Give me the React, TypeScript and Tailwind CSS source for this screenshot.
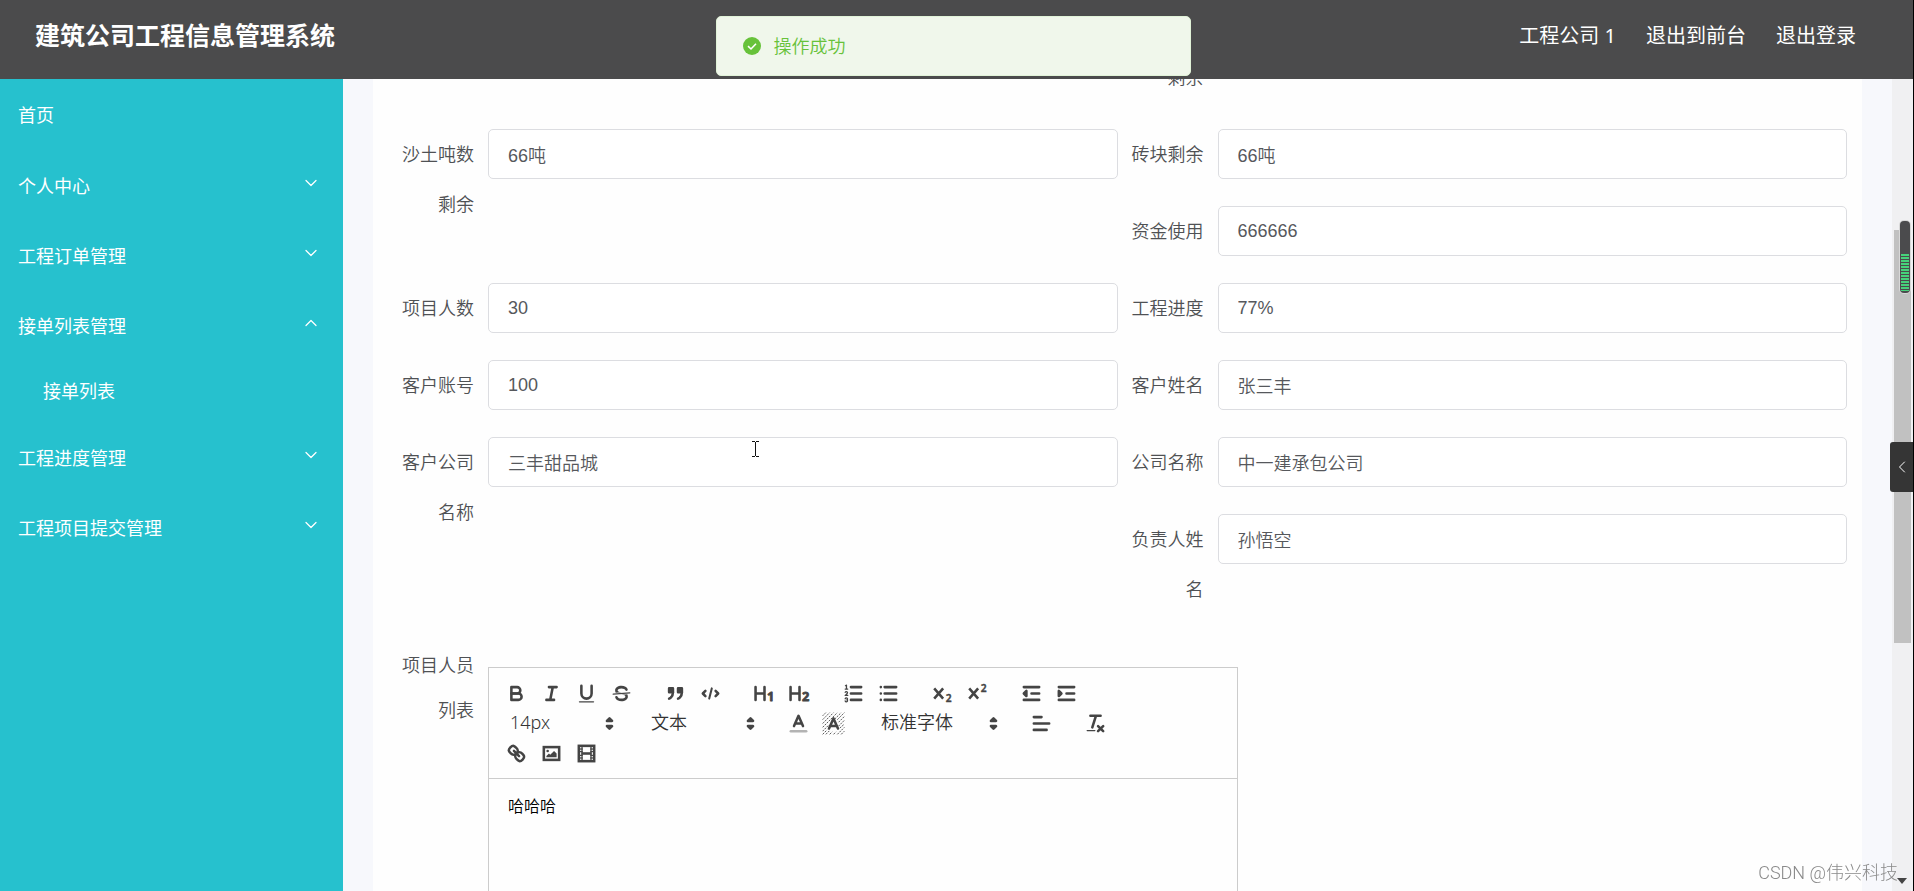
import { useState } from "react";
import type { ReactNode } from "react";
import { ChevronDown, ChevronLeft, ChevronUp } from "lucide-react";

const menu = [
  { title: "个人中心" },
  { title: "工程订单管理" },
  { title: "接单列表管理", children: ["接单列表"] },
  { title: "工程进度管理" },
  { title: "工程项目提交管理" },
];

type FieldProps = {
  id: string;
  label: string;
  value: string;
  className?: string;
};

const Field = ({ id, label, value, className = "" }: FieldProps) => {
  return (
    <div className={`flex items-start ${className}`}>
      <label
        htmlFor={id}
        className="w-[100px] shrink-0 pr-[14px] text-right text-lg leading-[50px] font-[350] text-[#4f5154]"
      >
        {label}
      </label>
      <input
        id={id}
        readOnly
        defaultValue={value}
        className="h-[50px] min-w-0 flex-1 rounded-[5px] border border-[#dcdde1] bg-white px-[19px] font-['Liberation_Sans','Noto_Sans_CJK_SC',sans-serif] text-lg font-[350] text-[#56585c] outline-none"
      />
    </div>
  );
};

const Icon = ({ children }: { children: ReactNode }) => (
  <svg
    viewBox="0 0 18 18"
    className="size-[23px] fill-none stroke-[#444] stroke-2"
    strokeLinecap="round"
    strokeLinejoin="round"
  >
    {children}
  </svg>
);

const solid = { fill: "#444", stroke: "none" };

const icons = {
  bold: (
    <Icon>
      <path d="M5,4H9.5A2.5,2.5,0,0,1,9.5,9H5Z" />
      <path d="M5,9h5.5A2.5,2.5,0,0,1,10.5,14H5Z" />
    </Icon>
  ),
  italic: (
    <Icon>
      <path d="M7,4H13M5,14H11M8,14L10,4" />
    </Icon>
  ),
  underline: (
    <Icon>
      <path d="M5,3V9a4,4,0,0,0,8,0V3" />
      <rect {...solid} height="1" rx="0.5" width="12" x="3" y="15" />
    </Icon>
  ),
  strike: (
    <Icon>
      <path strokeWidth="1" d="M15.5,8.5L2.5,9.5" />
      <path
        {...solid}
        d="M9.007,8C6.542,7.791,6,7.519,6,6.5,6,5.792,7.283,5,9,5c1.571,0,2.765.679,2.969,1.309a1,1,0,0,0,1.9-.617C13.356,4.106,11.354,3,9,3,6.2,3,4,4.538,4,6.5a3.2,3.2,0,0,0,.5,1.843Z"
      />
      <path
        {...solid}
        d="M8.984,10C11.457,10.208,12,10.479,12,11.5c0,0.708-1.283,1.5-3,1.5-1.571,0-2.765-.679-2.969-1.309a1,1,0,1,0-1.9.617C4.644,13.894,6.646,15,9,15c2.8,0,5-1.538,5-3.5a3.2,3.2,0,0,0-.5-1.843Z"
      />
    </Icon>
  ),
  quote: (
    <Icon>
      <rect fill="#444" height="3" width="3" x="4" y="5" />
      <rect fill="#444" height="3" width="3" x="11" y="5" />
      <path fill="#444" d="M7,8c0,4.031-3,5-3,5" />
      <path fill="#444" d="M14,8c0,4.031-3,5-3,5" />
    </Icon>
  ),
  code: (
    <Icon>
      <polyline points="5 7 3 9 5 11" />
      <polyline points="13 7 15 9 13 11" />
      <path strokeWidth="1.6" d="M10,5L8,13" />
    </Icon>
  ),
  h1: (
    <Icon>
      <path d="M2,4V14M9,4V14M2,9H9" />
      <text fill="#444" strokeWidth="0.6" x="11" y="15" fontSize="10" fontWeight="700">1</text>
    </Icon>
  ),
  h2: (
    <Icon>
      <path d="M2,4V14M9,4V14M2,9H9" />
      <text fill="#444" strokeWidth="0.6" x="11" y="15" fontSize="10" fontWeight="700">2</text>
    </Icon>
  ),
  ordered: (
    <Icon>
      <path d="M7,4H15M7,9H15M7,14H15" />
      <g strokeWidth="1">
        <path d="M2.5,5.5H4.5M3.5,5.5V2.5L2.7,2.9" />
        <path d="M4.5,10.5h-2c0-.234,1.85-1.076,1.85-2.234A0.959,0.959,0,0,0,2.5,8.156" />
        <path d="M2.5,14.846a0.959,0.959,0,0,0,1.85-.109A0.7,0.7,0,0,0,3.75,14a0.688,0.688,0,0,0,.6-0.736,0.959,0.959,0,0,0-1.85-.109" />
      </g>
    </Icon>
  ),
  bullet: (
    <Icon>
      <path d="M6,4H15M6,9H15M6,14H15M3,4H3M3,9H3M3,14H3" />
    </Icon>
  ),
  sub: (
    <Icon>
      <path strokeLinecap="butt" d="M2.5,5L9.5,13M9.5,5L2.5,13" />
      <text fill="#444" strokeWidth="0.3" x="11.5" y="16" fontSize="8" fontWeight="600">2</text>
    </Icon>
  ),
  sup: (
    <Icon>
      <path strokeLinecap="butt" d="M2.5,5L9.5,13M9.5,5L2.5,13" />
      <text fill="#444" strokeWidth="0.3" x="11.5" y="8" fontSize="8" fontWeight="600">2</text>
    </Icon>
  ),
  outdent: (
    <Icon>
      <path d="M3,14H15M3,4H15M9,9H15" />
      <polygon fill="#444" points="5 7 5 11 3 9" />
    </Icon>
  ),
  indent: (
    <Icon>
      <path d="M3,14H15M3,4H15M9,9H15" />
      <polygon fill="#444" points="3 7 3 11 5 9" />
    </Icon>
  ),
  color: (
    <Icon>
      <path opacity="0.4" d="M3,15H15" />
      <path d="M5.5,11L9,3L12.5,11M6.4,9H11.6" />
    </Icon>
  ),
  background: (
    <Icon>
      <path
        strokeWidth="0.7"
        strokeDasharray="1.5 0.8"
        strokeLinecap="butt"
        d="M0.5,3L3,0.5M0.5,6L6,0.5M0.5,9L9,0.5M0.5,12L12,0.5M0.5,15L5,10.5M10,5.5L15,0.5M0.5,17.5L4,14M12,6L17.5,0.5M13,8L17.5,3.5M13,11L17.5,6.5M6,17.5L8,15.5M9,17.5L11,15.5M12,17.5L17.5,12M14,12.5L17.5,9.5M15,17.5L17.5,15M3,17.5L6,14.5"
      />
      <path d="M5.5,13L9,5L12.5,13M6.4,11H11.6" />
    </Icon>
  ),
  align: (
    <Icon>
      <path d="M3,9H15M3,14H13M3,4H9" />
    </Icon>
  ),
  clean: (
    <Icon>
      <path d="M5,3H13M6.5,12L9.35,3M11,11L15,15M15,11L11,15" />
      <rect {...solid} height="1" rx="0.5" width="7" x="2" y="14" />
    </Icon>
  ),
  link: (
    <Icon>
      <path d="M7,7L11,11" />
      <path d="M8.9,4.577a3.476,3.476,0,0,1,.36,4.679A3.476,3.476,0,0,1,4.577,8.9C3.185,7.5,2.035,6.4,4.217,4.217S7.5,3.185,8.9,4.577Z" />
      <path d="M13.423,9.1a3.476,3.476,0,0,0-4.679-.36,3.476,3.476,0,0,0,.36,4.679c1.392,1.392,2.5,2.542,4.679.36S14.815,10.5,13.423,9.1Z" />
    </Icon>
  ),
  image: (
    <Icon>
      <rect height="10" width="12" x="3" y="4" strokeLinejoin="miter" />
      <circle {...solid} cx="6" cy="7" r="1" />
      <polyline {...solid} points="5 12 5 11 7 9 8 10 11 7 13 9 13 12 5 12" />
    </Icon>
  ),
  video: (
    <Icon>
      <rect height="12" width="12" x="3" y="3" strokeLinejoin="miter" />
      <g {...solid}>
        <rect height="12" width="1" x="5" y="3" />
        <rect height="12" width="1" x="12" y="3" />
        <rect height="2" width="8" x="5" y="8" />
        <rect height="1" width="3" x="3" y="5" />
        <rect height="1" width="3" x="3" y="7" />
        <rect height="1" width="3" x="3" y="10" />
        <rect height="1" width="3" x="3" y="12" />
        <rect height="1" width="3" x="12" y="5" />
        <rect height="1" width="3" x="12" y="7" />
        <rect height="1" width="3" x="12" y="10" />
        <rect height="1" width="3" x="12" y="12" />
      </g>
    </Icon>
  ),
};

const Tools = ({ names }: { names: (keyof typeof icons)[] }) => (
  <div className="flex">
    {names.map((name) => (
      <button key={name} type="button" aria-label={name} className="flex h-[30px] w-[35px] items-center justify-center">
        {icons[name]}
      </button>
    ))}
  </div>
);

const Picker = ({ label, value, className }: { label: string; value: string; className: string }) => (
  <div className={`relative h-[30px] ${className}`}>
    <select
      aria-label={label}
      className="h-full w-full appearance-none bg-transparent pb-[2px] pl-[11px] text-lg leading-[26px] font-[350] text-[#333] outline-none"
    >
      <option>{value}</option>
    </select>
    <span className="pointer-events-none absolute inset-y-0 right-0 flex items-center">
      <Icon>
        <polygon fill="#444" points="7 11 9 13 11 11" />
        <polygon fill="#444" points="7 7 9 5 11 7" />
      </Icon>
    </span>
  </div>
);

const Editor = () => {
  return (
    <div className="mt-6 w-[750px] border border-[#ccc]">
      <div className="border-b border-[#ccc] p-[10px]">
        <div className="flex gap-[19px]">
          <Tools names={["bold", "italic", "underline", "strike"]} />
          <Tools names={["quote", "code"]} />
          <Tools names={["h1", "h2"]} />
          <Tools names={["ordered", "bullet"]} />
          <Tools names={["sub", "sup"]} />
          <Tools names={["outdent", "indent"]} />
        </div>
        <div className="flex gap-[19px]">
          <Picker label="字号" value="14px" className="w-[122px]" />
          <Picker label="标题" value="文本" className="w-[122px]" />
          <Tools names={["color", "background"]} />
          <Picker label="字体" value="标准字体" className="w-[135px]" />
          <Tools names={["align"]} />
          <Tools names={["clean"]} />
        </div>
        <Tools names={["link", "image", "video"]} />
      </div>
      <textarea
        id="staff"
        defaultValue="哈哈哈"
        className="block h-[260px] w-full resize-none px-[19px] py-[15px] text-base leading-6 font-[350] text-black outline-none"
      />
    </div>
  );
};

const Sidebar = () => {
  const [opened, setOpened] = useState("接单列表管理");

  return (
    <nav className="w-[343px] shrink-0 bg-[#26c1ce] text-lg text-white">
      <a href="#home" className="flex h-[72px] items-center px-[18px]">
        首页
      </a>
      {menu.map(({ title, children }) => (
        <div key={title}>
          <button
            type="button"
            onClick={() => setOpened(opened === title ? "" : title)}
            className="flex h-[70px] w-full items-center justify-between pr-6 pl-[18px]"
          >
            {title}
            {opened === title ? (
              <ChevronUp className="mb-[7px] size-4 scale-125" strokeWidth={1.5} />
            ) : (
              <ChevronDown className="mb-[7px] size-4 scale-125" strokeWidth={1.5} />
            )}
          </button>
          {opened === title &&
            children?.map((child) => (
              <a key={child} href="#list" className="flex h-[62px] items-center pb-[2px] pl-[43px]">
                {child}
              </a>
            ))}
        </div>
      ))}
    </nav>
  );
};

const Scrollbar = () => (
  <div className="relative flex w-[21px] shrink-0 flex-col items-center bg-[#f0f0f2]">
    <div className="mt-[151px] h-[413px] w-[17px] bg-[#c1c1c1]" />
    <svg viewBox="0 0 10 6" className="absolute right-[6px] bottom-[7px] w-[10px] fill-[#444]">
      <path d="M0,0H10L5,6Z" />
    </svg>
    {/* level meter */}
    <svg viewBox="0 0 12 74" className="absolute top-[141px] right-[2px] h-[74px] w-[12px]">
      <rect width="12" height="74" rx="5" fill="#d8d8d8" />
      <rect x="1" y="1" width="10" height="72" rx="4" fill="#4b4b4d" />
      <path d="M6,34V71" stroke="#46d27a" strokeWidth="8" strokeDasharray="2 1" />
    </svg>
    <button
      type="button"
      aria-label="展开"
      className="absolute top-[363px] right-0 flex h-[50px] w-[23px] items-center justify-center rounded-l-[3px] bg-[#353535] text-white"
    >
      <ChevronLeft className="size-5" strokeWidth={1.2} />
    </button>
  </div>
);

const App = () => {
  return (
    <div className="flex h-screen flex-col overflow-hidden border-r border-black font-['Noto_Sans','Noto_Sans_CJK_SC',sans-serif]">
      <header className="flex h-[79px] shrink-0 items-center justify-between bg-[#4b4b4c] pr-[57px] pb-[7px] pl-[35px] text-white">
        <h1 className="text-[25px] font-bold">建筑公司工程信息管理系统</h1>
        <div className="flex gap-[30px] text-xl">
          <span>工程公司 1</span>
          <a href="#front">退出到前台</a>
          <a href="#logout">退出登录</a>
        </div>
      </header>

      <div className="flex min-h-0 flex-1">
        <Sidebar />

        <main className="min-w-0 flex-1 overflow-hidden bg-[#f7f8fc] px-[30px]">
          <form className="-mt-[27px] bg-[#fefefe] px-[15px]">
            <div className="grid grid-cols-2 gap-y-[27px]">
              <div className="col-start-2 h-[50px] w-[100px] pr-[14px] text-right text-lg leading-[50px] font-[350] text-[#4f5154]">
                剩余
              </div>
              <Field id="sand" label="沙土吨数剩余" value="66吨" className="row-span-2 h-[127px]" />
              <Field id="brick" label="砖块剩余" value="66吨" />
              <Field id="funds" label="资金使用" value="666666" />
              <Field id="people" label="项目人数" value="30" />
              <Field id="progress" label="工程进度" value="77%" />
              <Field id="account" label="客户账号" value="100" />
              <Field id="customer" label="客户姓名" value="张三丰" />
              <Field id="customerCompany" label="客户公司名称" value="三丰甜品城" className="row-span-2 h-[127px]" />
              <Field id="company" label="公司名称" value="中一建承包公司" />
              <Field id="leader" label="负责人姓名" value="孙悟空" />
            </div>

            <div className="mt-[29px] flex items-start">
              <label
                htmlFor="staff"
                className="w-[100px] shrink-0 pr-[14px] text-right text-lg leading-[45px] font-[350] text-[#4f5154]"
              >
                项目人员列表
              </label>
              <Editor />
            </div>
          </form>
        </main>

        <Scrollbar />
      </div>

      {/* Message */}
      <div className="pointer-events-none fixed inset-x-0 top-4 flex justify-center pr-2">
        <div
          role="status"
          className="flex h-[60px] w-[475px] items-center gap-[13px] rounded-[5px] border border-[#e1f3d8] bg-[#f0f7eb] px-[26px] text-lg font-[350] text-[#67c23a]"
        >
          <svg viewBox="0 0 18 18" className="size-[18px]">
            <circle cx="9" cy="9" r="9" fill="#67c23a" />
            <path d="M5,9.2L8,12L13,6.8" fill="none" stroke="#fff" strokeWidth="1.6" />
          </svg>
          操作成功
        </div>
      </div>

      {/* Text cursor */}
      <svg viewBox="0 0 10 18" className="pointer-events-none fixed top-[440px] left-[750px] h-[18px] w-[10px] fill-none stroke-[#111]">
        <path d="M2,1.5H5M6,1.5H9M5.5,2V16M2,16.5H5M6,16.5H9" />
      </svg>

      <p className="pointer-events-none fixed right-4 bottom-[5px] font-[Roboto,'Noto_Sans_CJK_SC',sans-serif] text-lg leading-[26px] font-light text-[#8a8a8a]">
        CSDN @伟兴科技
      </p>
    </div>
  );
};

export default App;
